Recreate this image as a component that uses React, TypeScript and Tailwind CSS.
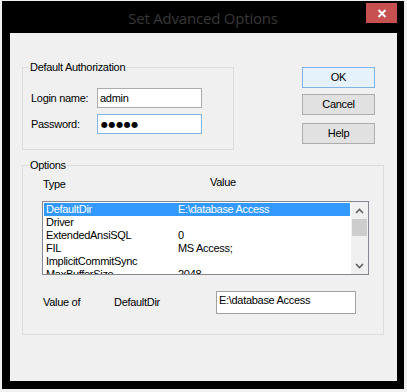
import React from "react"

const rows: [string, string][] = [
  ["DefaultDir", "E:\\database Access"],
  ["Driver", ""],
  ["ExtendedAnsiSQL", "0"],
  ["FIL", "MS Access;"],
  ["ImplicitCommitSync", ""],
  ["MaxBufferSize", "2048"],
]

function Chevron({ up }: { up?: boolean }) {
  return (
    <svg width="9" height="6" viewBox="0 0 9 6" className="block">
      <polyline
        points={up ? "1,5 4.5,1.5 8,5" : "1,1 4.5,4.5 8,1"}
        fill="none"
        stroke="#606060"
        strokeWidth="1.6"
      />
    </svg>
  )
}

export default function App() {
  return (
    <div className="w-[407px] h-[392px] overflow-hidden bg-[#f0f0f0] pt-px pl-[2px] font-['Liberation_Sans',Arial,sans-serif] text-[11px] leading-[13px] tracking-[-0.3px] text-black">
      <div className="w-[402px] h-[388px] bg-black flex flex-col">
        {/* title bar */}
        <div className="relative h-[32px] shrink-0 flex items-center justify-center pt-[2px]">
          <span className="font-['Open_Sans',sans-serif] text-[15px] leading-[20px] tracking-[-0.2px] text-[#383838]">
            Set Advanced Options
          </span>
          <div className="absolute top-[2px] right-[7px] w-[31px] h-[20px] bg-[#c75050] flex items-center justify-center">
            <svg width="10" height="9" viewBox="0 0 10 9">
              <path d="M1.5 1 L8.5 8 M8.5 1 L1.5 8" stroke="#fff" strokeWidth="2" />
            </svg>
          </div>
        </div>

        {/* client area */}
        <div className="ml-[8px] mr-[7px] h-[348px] bg-[#f0f0f0] pl-[12px] pt-[34px]">
          <div className="flex items-start">
            {/* Default Authorization */}
            <div className="relative w-[212px] h-[83px] border border-[#dcdcdc] pl-[8px] pt-[20px]">
              <span className="absolute left-[6px] -top-[7px] px-[1px] bg-[#f0f0f0]">Default Authorization</span>
              <div className="flex items-center">
                <span className="w-[66px]">Login name:</span>
                <div className="w-[105px] h-[20px] border border-[#ababab] bg-white pl-[2px] flex items-center">admin</div>
              </div>
              <div className="flex items-center mt-[6px]">
                <span className="w-[66px]">Password:</span>
                <div className="w-[105px] h-[20px] border border-[#7eb4ea] bg-white pl-[3px] flex items-center font-['DejaVu_Sans',sans-serif] text-[8px] tracking-[0.6px]">
                  ●●●●●
                </div>
              </div>
            </div>

            {/* buttons */}
            <div className="ml-[68px] flex flex-col">
              <div className="w-[73px] h-[21px] border border-[#7eb4ea] bg-[#e5f1fb] flex items-center justify-center">OK</div>
              <div className="mt-[6px] w-[73px] h-[21px] border border-[#adadad] bg-[#e1e1e1] flex items-center justify-center">Cancel</div>
              <div className="mt-[8px] w-[73px] h-[21px] border border-[#adadad] bg-[#e1e1e1] flex items-center justify-center">Help</div>
            </div>
          </div>

          {/* Options */}
          <div className="relative mt-[15px] w-[362px] h-[170px] border border-[#dcdcdc] pl-[19px] pt-[10px]">
            <span className="absolute left-[6px] -top-[7px] px-[1px] bg-[#f0f0f0]">Options</span>
            <div className="flex items-start pl-[1px]">
              <span className="w-[167px] mt-[2px]">Type</span>
              <span>Value</span>
            </div>

            <div className="mt-[10px] w-[327px] h-[74px] border border-[#828790] bg-white flex">
              <div className="flex-1 overflow-hidden pt-[1px] px-[1px]">
                {rows.map(([k, v], i) => (
                  <div
                    key={k}
                    className={
                      i === 0
                        ? "h-[13px] flex items-center pl-[2px] bg-[#3399ff] text-white whitespace-nowrap"
                        : "h-[13px] flex items-center pl-[2px] whitespace-nowrap"
                    }
                  >
                    <span className="w-[132px] shrink-0">{k}</span>
                    <span>{v}</span>
                  </div>
                ))}
              </div>
              <div className="w-[17px] bg-[#f0f0f0] flex flex-col">
                <div className="h-[17px] flex items-center justify-center">
                  <Chevron up />
                </div>
                <div className="h-[17px] mx-[1px] bg-[#cdcdcd]" />
                <div className="flex-1" />
                <div className="h-[17px] flex items-center justify-center">
                  <Chevron />
                </div>
              </div>
            </div>

            <div className="mt-[16px] flex items-start pl-[1px]">
              <span className="w-[71px] mt-[5px]">Value of</span>
              <span className="w-[102px] mt-[5px]">DefaultDir</span>
              <div className="w-[140px] h-[23px] border border-[#a0a0a0] bg-white pl-[2px] pt-[2px]">E:\database Access</div>
            </div>
          </div>
        </div>
      </div>
    </div>
  )
}
